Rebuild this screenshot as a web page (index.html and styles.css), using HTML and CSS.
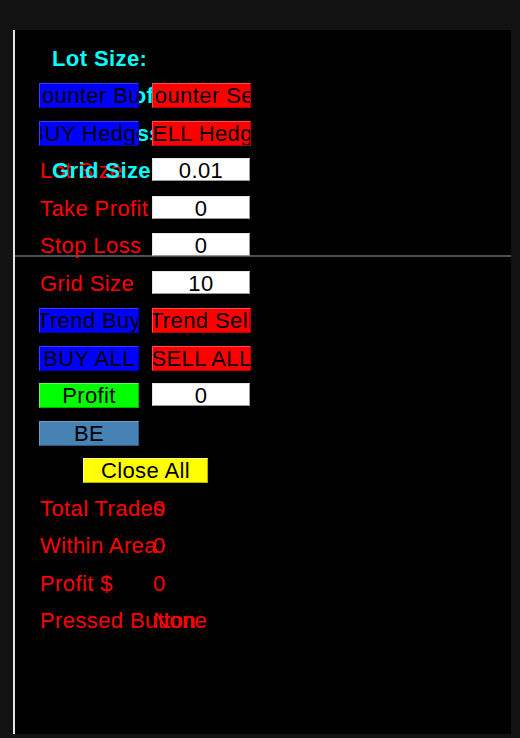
FILE: index.html
```html
<!DOCTYPE html>
<html>
  <head>
    <meta charset="UTF-8">
    <meta name="viewport" content="width=device-width, initial-scale=1.0">
    <title>Grid Panel</title>
    <link rel="stylesheet" href="styles.css">
  </head>

  <body>
    <div class="chart">
      <div class="hline"></div>

      <div class="captions">
        <div>Lot Size:</div>
        <div>Take Profit:</div>
        <div>Stop Loss:</div>
        <div>Grid Size:</div>
      </div>

      <div class="panel">
        <div class="btn btn-blue"><span>Counter Buy</span></div>
        <div class="btn btn-red"><span>Counter Sell</span></div>

        <div class="btn btn-blue"><span>BUY Hedge</span></div>
        <div class="btn btn-red"><span>SELL Hedge</span></div>

        <div class="label">Lot Size</div>
        <div class="field">0.01</div>

        <div class="label">Take Profit</div>
        <div class="field">0</div>

        <div class="label">Stop Loss</div>
        <div class="field">0</div>

        <div class="label">Grid Size</div>
        <div class="field">10</div>

        <div class="btn btn-blue"><span>Trend Buy</span></div>
        <div class="btn btn-red"><span>Trend Sell</span></div>

        <div class="btn btn-blue"><span>BUY ALL</span></div>
        <div class="btn btn-red"><span>SELL ALL</span></div>

        <div class="btn btn-green"><span>Profit</span></div>
        <div class="field">0</div>

        <div class="btn btn-steel"><span>BE</span></div>
        <div></div>

        <div class="btn btn-yellow btn-close"><span>Close All</span></div>

        <div class="label">Total Trades</div>
        <div class="value">0</div>

        <div class="label">Within Area</div>
        <div class="value">0</div>

        <div class="label">Profit $</div>
        <div class="value">0</div>

        <div class="label">Pressed Button</div>
        <div class="value">None</div>
      </div>
    </div>
  </body>
</html>
```

FILE: styles.css
```css
* {
  box-sizing: border-box;
}

body {
  margin: 0;
  background: #121212;
  font-family: "Liberation Sans", Arial, sans-serif;
  font-size: 22px;
  letter-spacing: 0.4px;
}

.chart {
  position: relative;
  margin: 30px 0 0 13px;
  width: 498px;
  height: 704px;
  background: #000;
  border-left: 2px solid #e4e4e4;
}

.hline {
  position: absolute;
  top: 225px;
  left: 0;
  right: 0;
  height: 2px;
  background: #4a5159;
}

.captions {
  position: absolute;
  top: 10px;
  left: 37px;
  z-index: 2;
  color: #00ffff;
  font-weight: bold;
  line-height: 37.33px;
  white-space: nowrap;
}

.panel {
  display: grid;
  grid-template-columns: 100px 99px;
  grid-auto-rows: 37.5px;
  column-gap: 13px;
  padding: 53px 0 0 24px;
}

.label, .value {
  position: relative;
  z-index: 1;
  color: #ff0000;
  line-height: 25px;
  white-space: nowrap;
}

.label {
  padding-left: 1px;
}

.value {
  padding-left: 1px;
}

.btn {
  position: relative;
  z-index: 3;
  display: flex;
  justify-content: center;
  height: 25px;
  line-height: 23px;
  color: #000;
  white-space: nowrap;
  overflow: hidden;
  border: 1px solid;
}

.btn span {
  flex: none;
}

.btn-blue {
  background: #0000ff;
  border-color: #3a3aff #0000b8 #0000b8 #3a3aff;
}

.btn-red {
  background: #ff0000;
  border-color: #ff4a4a #b80000 #b80000 #ff4a4a;
}

.btn-green {
  background: #00ff00;
  border-color: #5aff5a #00b400 #00b400 #5aff5a;
}

.btn-steel {
  background: #4682b4;
  border-color: #6e9fc8 #2f5a7e #2f5a7e #6e9fc8;
}

.btn-yellow {
  background: #ffff00;
  border-color: #ffff80 #b4b400 #b4b400 #ffff80;
}

.btn-close {
  grid-column: 1 / span 2;
  width: 125px;
  margin-left: 44px;
}

.field {
  position: relative;
  z-index: 3;
  width: 98px;
  height: 23px;
  padding-top: 1px;
  line-height: 21px;
  text-align: center;
  color: #000;
  background: #fff;
  border: 1px solid;
  border-color: #e6e6e6 #9a9a9a #9a9a9a #e6e6e6;
}
```
